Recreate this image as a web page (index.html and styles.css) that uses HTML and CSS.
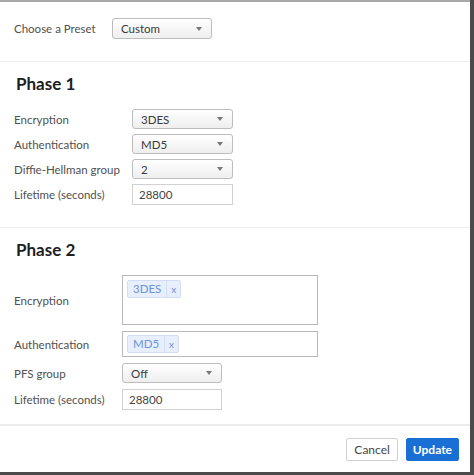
FILE: index.html
```html
<!DOCTYPE html>
<html lang="en">
<head>
  <meta charset="UTF-8">
  <title>Edit VPN Policy</title>
  <link rel="stylesheet" href="styles.css">
</head>
<body>

<div class="modal">

  <div class="preset-row">
    <span class="label">Choose a Preset</span>
    <div class="select select-preset">Custom<span class="caret"></span></div>
  </div>

  <section class="phase phase-1">
    <h2>Phase 1</h2>
    <div class="rows">
      <span class="label">Encryption</span>
      <div class="select">3DES<span class="caret"></span></div>

      <span class="label">Authentication</span>
      <div class="select">MD5<span class="caret"></span></div>

      <span class="label">Diffie-Hellman group</span>
      <div class="select">2<span class="caret"></span></div>

      <span class="label">Lifetime (seconds)</span>
      <div class="text-input">28800</div>
    </div>
  </section>

  <section class="phase phase-2">
    <h2>Phase 2</h2>
    <div class="rows">
      <span class="label">Encryption</span>
      <div class="multi multi-tall">
        <span class="tag"><span class="tag-text">3DES</span><span class="tag-x">x</span></span>
      </div>

      <span class="label">Authentication</span>
      <div class="multi">
        <span class="tag"><span class="tag-text">MD5</span><span class="tag-x">x</span></span>
      </div>

      <span class="label">PFS group</span>
      <div class="select">Off<span class="caret"></span></div>

      <span class="label">Lifetime (seconds)</span>
      <div class="text-input">28800</div>
    </div>
  </section>

  <footer>
    <button class="btn btn-cancel">Cancel</button>
    <button class="btn btn-update">Update</button>
  </footer>

</div>

</body>
</html>
```

FILE: styles.css
```css
body {
  margin: 0;
  background-color: #4b4b4b;
  font-family: Lato, 'Noto Sans', sans-serif;
  font-size: 11.5px;
  color: #505050;
}
.modal {
  width: 470px;
  height: 470px;
  background: white;
  border-top: 2px solid #a8a8a8;
  display: flex;
  flex-direction: column;
}
.label {
  display: flex;
  align-items: center;
}
.preset-row {
  display: grid;
  grid-template-columns: 98px 100px;
  height: 21px;
  padding: 16px 14px 22px;
  border-bottom: 1px solid #ededed;
}
.select {
  position: relative;
  box-sizing: border-box;
  height: 20px;
  width: 101px;
  padding-left: 8px;
  display: flex;
  align-items: center;
  border: 1px solid #bdbdbd;
  border-radius: 3px;
  background: linear-gradient(#ffffff, #eeeeee);
  color: #3a3a3a;
}
.select-preset {
  width: 100px;
  height: 21px;
}
.caret {
  position: absolute;
  right: 9px;
  top: 50%;
  margin-top: -2px;
  border-left: 3px solid transparent;
  border-right: 3px solid transparent;
  border-top: 4px solid #777;
}
.text-input {
  box-sizing: border-box;
  height: 21px;
  width: 101px;
  padding-left: 6px;
  display: flex;
  align-items: center;
  border: 1px solid #d2d2d2;
  color: #444;
}
.phase {
  padding: 12px 0 0 14px;
  border-bottom: 1px solid #ededed;
}
.phase h2 {
  margin: 0 0 15px 2px;
  font-size: 17px;
  line-height: 20px;
  font-weight: 700;
  color: #1e1e1e;
}
.phase-1 {
  padding-bottom: 23px;
}
.phase-1 .rows {
  display: grid;
  grid-template-columns: 118px 101px;
  grid-auto-rows: 20px;
  row-gap: 5px;
}
.phase-2 {
  padding-bottom: 14px;
}
.phase-2 .rows {
  display: grid;
  grid-template-columns: 108px 196px;
  row-gap: 6px;
}
.phase-2 .select,
.phase-2 .text-input {
  width: 100px;
}
.multi {
  box-sizing: border-box;
  height: 26px;
  padding: 3px 4px;
  border: 1px solid #b9b9b9;
  display: flex;
  align-items: flex-start;
}
.multi-tall {
  height: 50px;
  padding-top: 4px;
}
.tag {
  display: flex;
  height: 16px;
  background: #e7eefc;
  border: 1px solid #d3def6;
  border-radius: 2px;
  color: #6f92d8;
  line-height: 16px;
}
.tag-text {
  padding: 0 5px;
}
.tag-x {
  padding: 0 4px;
  border-left: 1px solid #d3def6;
  font-size: 10px;
}
footer {
  margin-top: auto;
  display: flex;
  justify-content: flex-end;
  gap: 8px;
  padding: 12px 11px 11px;
  border-top: 1px solid #ededed;
}
.btn {
  height: 23px;
  padding: 0 6px;
  border-radius: 2px;
  font-family: Lato, 'Noto Sans', sans-serif;
  font-size: 12px;
  cursor: pointer;
}
.btn-cancel {
  padding: 0 7px;
  background: white;
  border: 1px solid #cfcfcf;
  color: #444;
}
.btn-update {
  background-color: #1a6fd4;
  border: 1px solid #1a6fd4;
  color: white;
  font-weight: 700;
}
```
